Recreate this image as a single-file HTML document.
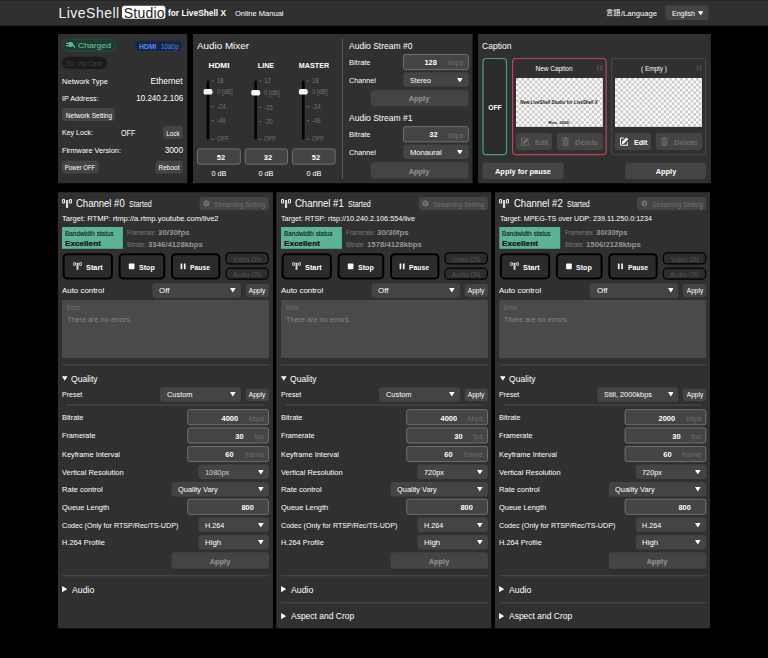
<!DOCTYPE html>
<html lang="en"><head><meta charset="utf-8"><title>LiveShell Studio for LiveShell X</title>
<style>
html,body{margin:0;padding:0;background:#000;}
body{width:768px;height:658px;position:relative;overflow:hidden;font-family:"Liberation Sans","Noto Sans CJK JP",sans-serif;color:#fff;}
body>div,body>svg{position:absolute;display:block;}
</style></head><body>
<svg style="left:0;top:0" width="768" height="658" viewBox="0 0 768 658"><rect x="0" y="0" width="768" height="25.7" fill="#303030"/><rect x="0" y="0" width="768" height="0.8" fill="#242424"/><rect x="122" y="5.8" width="43.4" height="12.9" fill="#fff" rx="2.5"/><rect x="665.4" y="5.3" width="42.9" height="14.7" fill="#444444" rx="3"/><rect x="58" y="34" width="129.2" height="149.3" fill="#303030"/><rect x="62.5" y="39.2" width="52.8" height="12" stroke="#28503f" stroke-width="1" fill="#1f3b30" rx="6"/><rect x="134.5" y="40.1" width="48" height="11.4" stroke="#243458" stroke-width="1" fill="#1b253c" rx="5.7"/><rect x="62" y="56.8" width="45" height="12.2" fill="#1b1b1b" rx="6.1"/><rect x="62" y="108" width="53" height="13" fill="#444444" rx="3"/><rect x="163" y="126" width="19.8" height="13" fill="#444444" rx="3"/><rect x="62" y="160.8" width="36.8" height="12.8" fill="#444444" rx="3"/><rect x="155.5" y="160.8" width="27.3" height="12.8" fill="#444444" rx="3"/><rect x="193" y="34" width="279.6" height="149.3" fill="#303030"/><rect x="197.45" y="148.95" width="42.9" height="15.2" stroke="#767676" stroke-width="0.9" fill="#444444" rx="2.05"/><rect x="245.25" y="148.95" width="42.3" height="15.2" stroke="#767676" stroke-width="0.9" fill="#444444" rx="2.05"/><rect x="292.45" y="148.95" width="42.7" height="15.2" stroke="#767676" stroke-width="0.9" fill="#444444" rx="2.05"/><rect x="403.45" y="54.45" width="64.9" height="15.2" stroke="#767676" stroke-width="0.9" fill="#444444" rx="2.05"/><rect x="403.4" y="72.3" width="65.2" height="14.5" fill="#444444" rx="3"/><rect x="370.8" y="89.9" width="97.8" height="16.4" fill="#444444" rx="3"/><rect x="403.45" y="126.65" width="64.9" height="15.2" stroke="#767676" stroke-width="0.9" fill="#444444" rx="2.05"/><rect x="403.4" y="144.5" width="65.2" height="14.5" fill="#444444" rx="3"/><rect x="370.8" y="162.1" width="97.8" height="16.4" fill="#444444" rx="3"/><rect x="478" y="34" width="232.9" height="149.3" fill="#303030"/><rect x="483" y="58.5" width="23.5" height="96.2" stroke="#4c9c84" stroke-width="1.2" fill="#2b2b2b" rx="3.4"/><rect x="512.6" y="58.5" width="93.5" height="96.2" stroke="#b14a58" stroke-width="1.2" fill="none" rx="3.4"/><rect x="597" y="65" width="1.9" height="5.7" fill="#484848"/><rect x="600.1" y="65" width="2.2" height="5.7" fill="#484848"/><rect x="515.9" y="133" width="36.1" height="17" fill="#444444" rx="3"/><rect x="556.7" y="133" width="46.1" height="17" fill="#444444" rx="3"/><rect x="611.6" y="58.5" width="93.9" height="96.2" stroke="#454545" stroke-width="1.2" fill="none" rx="3.4"/><rect x="696.4" y="65" width="1.9" height="5.7" fill="#484848"/><rect x="699.5" y="65" width="2.2" height="5.7" fill="#484848"/><rect x="614.9" y="133" width="36.1" height="17" fill="#444444" rx="3"/><rect x="655.7" y="133" width="46.5" height="17" fill="#444444" rx="3"/><rect x="482.4" y="162.4" width="81.4" height="16.6" fill="#444444" rx="3"/><rect x="625.3" y="162.4" width="80.7" height="16.6" fill="#444444" rx="3"/><rect x="57.9" y="192.2" width="215.1" height="436.2" fill="#303030"/><rect x="199.7" y="197" width="69.2" height="13.2" fill="#444444" rx="3"/><rect x="62" y="227" width="60.9" height="21.8" fill="#5fb395"/><rect x="63.6" y="254.3" width="48.3" height="24.1" stroke="#000" stroke-width="2" fill="#2b2b2b" rx="3.5"/><rect x="119.6" y="254.3" width="44.7" height="24.1" stroke="#000" stroke-width="2" fill="#2b2b2b" rx="3.5"/><rect x="172" y="254.3" width="47.4" height="24.1" stroke="#000" stroke-width="2" fill="#2b2b2b" rx="3.5"/><rect x="226" y="252.9" width="42.3" height="11" stroke="#000" stroke-width="1.2" fill="#2d2d2d" rx="3.9"/><rect x="226" y="268.2" width="42.3" height="11" stroke="#000" stroke-width="1.2" fill="#2d2d2d" rx="3.9"/><rect x="152.4" y="283.2" width="88.6" height="14.5" fill="#444444" rx="3"/><rect x="245.6" y="284" width="23.3" height="13" fill="#444444" rx="3"/><rect x="62" y="300" width="206.9" height="58" fill="#4a4a4a" rx="1"/><rect x="160" y="387.3" width="81" height="14.5" fill="#444444" rx="3"/><rect x="245.6" y="388.4" width="23.3" height="12.8" fill="#444444" rx="3"/><rect x="66.5" y="404.6" width="197.9" height="0.8" fill="#555"/><rect x="187.75" y="409.65" width="80.8" height="15.1" stroke="#767676" stroke-width="0.9" fill="#444444" rx="2.05"/><rect x="187.75" y="427.85" width="80.8" height="15.1" stroke="#767676" stroke-width="0.9" fill="#444444" rx="2.05"/><rect x="187.75" y="446.45" width="80.8" height="15.1" stroke="#767676" stroke-width="0.9" fill="#444444" rx="2.05"/><rect x="198.5" y="464.6" width="70.4" height="14.5" fill="#444444" rx="3"/><rect x="171.6" y="482" width="97.3" height="14.4" fill="#444444" rx="3"/><rect x="187.75" y="499.25" width="80.8" height="15.1" stroke="#767676" stroke-width="0.9" fill="#444444" rx="2.05"/><rect x="198.5" y="517.5" width="70.4" height="14.5" fill="#444444" rx="3"/><rect x="198.5" y="535" width="70.4" height="14.4" fill="#444444" rx="3"/><rect x="171.6" y="552.3" width="97.3" height="16.5" fill="#444444" rx="3"/><rect x="276.25" y="192.2" width="215.1" height="436.2" fill="#303030"/><rect x="418.7" y="197" width="69.2" height="13.2" fill="#444444" rx="3"/><rect x="281" y="227" width="60.9" height="21.8" fill="#5fb395"/><rect x="282.6" y="254.3" width="48.3" height="24.1" stroke="#000" stroke-width="2" fill="#2b2b2b" rx="3.5"/><rect x="338.6" y="254.3" width="44.7" height="24.1" stroke="#000" stroke-width="2" fill="#2b2b2b" rx="3.5"/><rect x="391" y="254.3" width="47.4" height="24.1" stroke="#000" stroke-width="2" fill="#2b2b2b" rx="3.5"/><rect x="445" y="252.9" width="42.3" height="11" stroke="#000" stroke-width="1.2" fill="#2d2d2d" rx="3.9"/><rect x="445" y="268.2" width="42.3" height="11" stroke="#000" stroke-width="1.2" fill="#2d2d2d" rx="3.9"/><rect x="371.4" y="283.2" width="88.6" height="14.5" fill="#444444" rx="3"/><rect x="464.6" y="284" width="23.3" height="13" fill="#444444" rx="3"/><rect x="281" y="300" width="206.9" height="58" fill="#4a4a4a" rx="1"/><rect x="379" y="387.3" width="81" height="14.5" fill="#444444" rx="3"/><rect x="464.6" y="388.4" width="23.3" height="12.8" fill="#444444" rx="3"/><rect x="285.5" y="404.6" width="197.9" height="0.8" fill="#555"/><rect x="406.75" y="409.65" width="80.8" height="15.1" stroke="#767676" stroke-width="0.9" fill="#444444" rx="2.05"/><rect x="406.75" y="427.85" width="80.8" height="15.1" stroke="#767676" stroke-width="0.9" fill="#444444" rx="2.05"/><rect x="406.75" y="446.45" width="80.8" height="15.1" stroke="#767676" stroke-width="0.9" fill="#444444" rx="2.05"/><rect x="417.5" y="464.6" width="70.4" height="14.5" fill="#444444" rx="3"/><rect x="390.6" y="482" width="97.3" height="14.4" fill="#444444" rx="3"/><rect x="406.75" y="499.25" width="80.8" height="15.1" stroke="#767676" stroke-width="0.9" fill="#444444" rx="2.05"/><rect x="417.5" y="517.5" width="70.4" height="14.5" fill="#444444" rx="3"/><rect x="417.5" y="535" width="70.4" height="14.4" fill="#444444" rx="3"/><rect x="390.6" y="552.3" width="97.3" height="16.5" fill="#444444" rx="3"/><rect x="494.9" y="192.2" width="215.1" height="436.2" fill="#303030"/><rect x="637" y="197" width="69.2" height="13.2" fill="#444444" rx="3"/><rect x="499.3" y="227" width="60.9" height="21.8" fill="#5fb395"/><rect x="500.9" y="254.3" width="48.3" height="24.1" stroke="#000" stroke-width="2" fill="#2b2b2b" rx="3.5"/><rect x="556.9" y="254.3" width="44.7" height="24.1" stroke="#000" stroke-width="2" fill="#2b2b2b" rx="3.5"/><rect x="609.3" y="254.3" width="47.4" height="24.1" stroke="#000" stroke-width="2" fill="#2b2b2b" rx="3.5"/><rect x="663.3" y="252.9" width="42.3" height="11" stroke="#000" stroke-width="1.2" fill="#2d2d2d" rx="3.9"/><rect x="663.3" y="268.2" width="42.3" height="11" stroke="#000" stroke-width="1.2" fill="#2d2d2d" rx="3.9"/><rect x="589.7" y="283.2" width="88.6" height="14.5" fill="#444444" rx="3"/><rect x="682.9" y="284" width="23.3" height="13" fill="#444444" rx="3"/><rect x="499.3" y="300" width="206.9" height="58" fill="#4a4a4a" rx="1"/><rect x="597.3" y="387.3" width="81" height="14.5" fill="#444444" rx="3"/><rect x="682.9" y="388.4" width="23.3" height="12.8" fill="#444444" rx="3"/><rect x="503.8" y="404.6" width="197.9" height="0.8" fill="#555"/><rect x="625.05" y="409.65" width="80.8" height="15.1" stroke="#767676" stroke-width="0.9" fill="#444444" rx="2.05"/><rect x="625.05" y="427.85" width="80.8" height="15.1" stroke="#767676" stroke-width="0.9" fill="#444444" rx="2.05"/><rect x="625.05" y="446.45" width="80.8" height="15.1" stroke="#767676" stroke-width="0.9" fill="#444444" rx="2.05"/><rect x="635.8" y="464.6" width="70.4" height="14.5" fill="#444444" rx="3"/><rect x="608.9" y="482" width="97.3" height="14.4" fill="#444444" rx="3"/><rect x="625.05" y="499.25" width="80.8" height="15.1" stroke="#767676" stroke-width="0.9" fill="#444444" rx="2.05"/><rect x="635.8" y="517.5" width="70.4" height="14.5" fill="#444444" rx="3"/><rect x="635.8" y="535" width="70.4" height="14.4" fill="#444444" rx="3"/><rect x="608.9" y="552.3" width="97.3" height="16.5" fill="#444444" rx="3"/></svg>
<div style="top:3px;height:20px;line-height:20px;font-size:14px;color:#f2f2f2;white-space:nowrap;left:58.5px;transform-origin:0 50%;transform:scaleX(1.000);letter-spacing:0.48px;">LiveShell</div>
<div style="top:3px;height:20px;line-height:20px;font-size:14px;color:#222;white-space:nowrap;left:123.7px;transform-origin:0 50%;transform:scaleX(1.000);letter-spacing:0.25px;">Studio</div>
<div style="top:3px;height:20px;line-height:20px;font-size:9.2px;color:#fff;white-space:nowrap;font-weight:700;left:167.8px;transform-origin:0 50%;transform:scaleX(0.908);">for LiveShell X</div>
<div style="top:4px;height:20px;line-height:20px;font-size:8px;color:#fff;white-space:nowrap;left:234.9px;transform-origin:0 50%;transform:scaleX(0.940);">Online Manual</div>
<div style="top:3px;height:20px;line-height:20px;font-size:7.3px;color:#fff;white-space:nowrap;left:606px;transform-origin:0 50%;transform:scaleX(1.000);">言語</div>
<div style="top:4px;height:20px;line-height:20px;font-size:8px;color:#fff;white-space:nowrap;left:620.6px;transform-origin:0 50%;transform:scaleX(0.952);">/Language</div>
<div style="top:4px;height:20px;line-height:20px;font-size:8px;color:#fff;white-space:nowrap;left:672.2px;transform-origin:0 50%;transform:scaleX(0.877);">English</div>
<svg style="left:697.6px;top:10.6px;" width="5.4" height="4.6" viewBox="0 0 10 8"><path d="M0 0H10L5 8Z" fill="#fff"/></svg>
<svg style="left:65.8px;top:41.6px;" width="9.6" height="6.6" viewBox="0 0 19 13"><rect x="0" y="1.4" width="7" height="2.3" rx="1" fill="#60b690"/><rect x="0" y="6" width="7" height="2.3" rx="1" fill="#60b690"/><path d="M5.5 0h4a4.9 4.9 0 0 1 0 9.8h-4z" fill="#60b690"/><path d="M13.2 6.6c3 0.300 4.200 2.600 4.800 5.800" stroke="#60b690" stroke-width="2.2" fill="none" stroke-linecap="round"/></svg>
<div style="top:36px;height:20px;line-height:20px;font-size:7.9px;color:#60b690;white-space:nowrap;left:78.3px;transform-origin:0 50%;transform:scaleX(1.092);-webkit-text-stroke:0.15px #60b690;">Charged</div>
<div style="top:37px;height:20px;line-height:20px;font-size:7px;color:#4d8df5;white-space:nowrap;font-weight:700;left:138.8px;transform-origin:0 50%;transform:scaleX(0.978);">HDMI</div>
<div style="top:37px;height:20px;line-height:20px;font-size:6.9px;color:#4785ee;white-space:nowrap;left:161.1px;transform-origin:0 50%;transform:scaleX(0.922);">1080p</div>
<div style="top:54px;height:20px;line-height:20px;font-size:7.2px;color:#424242;white-space:nowrap;left:66.3px;transform-origin:0 50%;transform:scaleX(0.800);">SD</div>
<div style="top:54px;height:20px;line-height:20px;font-size:7.2px;color:#424242;white-space:nowrap;left:79.3px;transform-origin:0 50%;transform:scaleX(0.847);">No Card</div>
<div style="top:72px;height:20px;line-height:20px;font-size:7.7px;color:#fff;white-space:nowrap;left:62px;transform-origin:0 50%;transform:scaleX(0.980);">Network Type</div>
<div style="top:71px;height:20px;line-height:20px;font-size:8.6px;color:#fff;white-space:nowrap;right:585.2px;text-align:right;transform-origin:100% 50%;transform:scaleX(0.984);">Ethernet</div>
<div style="top:89px;height:20px;line-height:20px;font-size:7.7px;color:#fff;white-space:nowrap;left:62px;transform-origin:0 50%;transform:scaleX(0.935);">IP Address:</div>
<div style="top:88px;height:20px;line-height:20px;font-size:8.6px;color:#fff;white-space:nowrap;right:585.2px;text-align:right;transform-origin:100% 50%;transform:scaleX(0.936);">10.240.2.106</div>
<div style="top:106px;height:20px;line-height:20px;font-size:6.7px;color:#fff;white-space:nowrap;left:-11.5px;width:200px;text-align:center;transform:scaleX(0.981);">Network Setting</div>
<div style="top:123px;height:20px;line-height:20px;font-size:7.7px;color:#fff;white-space:nowrap;left:62px;transform-origin:0 50%;transform:scaleX(0.917);">Key Lock:</div>
<div style="top:123px;height:20px;line-height:20px;font-size:8.6px;color:#fff;white-space:nowrap;left:120.8px;transform-origin:0 50%;transform:scaleX(0.832);">OFF</div>
<div style="top:124px;height:20px;line-height:20px;font-size:6.7px;color:#fff;white-space:nowrap;left:73.4px;width:200px;text-align:center;transform:scaleX(0.954);">Lock</div>
<div style="top:141px;height:20px;line-height:20px;font-size:7.7px;color:#fff;white-space:nowrap;left:62px;transform-origin:0 50%;transform:scaleX(0.951);">Firmware Version:</div>
<div style="top:140px;height:20px;line-height:20px;font-size:8.6px;color:#fff;white-space:nowrap;right:585.2px;text-align:right;transform-origin:100% 50%;transform:scaleX(0.967);">3000</div>
<div style="top:158px;height:20px;line-height:20px;font-size:6.7px;color:#fff;white-space:nowrap;left:-19.8px;width:200px;text-align:center;transform:scaleX(0.885);">Power OFF</div>
<div style="top:158px;height:20px;line-height:20px;font-size:6.7px;color:#fff;white-space:nowrap;left:68.9px;width:200px;text-align:center;transform:scaleX(0.972);">Reboot</div>
<div style="top:36px;height:20px;line-height:20px;font-size:9.6px;color:#fff;white-space:nowrap;left:197px;transform-origin:0 50%;transform:scaleX(1.026);">Audio Mixer</div>
<div style="top:56px;height:20px;line-height:20px;font-size:7.6px;color:#fff;white-space:nowrap;font-weight:700;left:118.75px;width:200px;text-align:center;transform:scaleX(1.081);">HDMI</div>
<div style="top:71px;height:20px;line-height:20px;font-size:6.4px;color:#727272;white-space:nowrap;left:217px;transform-origin:0 50%;transform:scaleX(0.940);">18</div>
<div style="top:82px;height:20px;line-height:20px;font-size:6.4px;color:#727272;white-space:nowrap;left:217px;transform-origin:0 50%;transform:scaleX(0.940);">0 [dB]</div>
<div style="top:97px;height:20px;line-height:20px;font-size:6.4px;color:#727272;white-space:nowrap;left:217px;transform-origin:0 50%;transform:scaleX(0.940);">-24</div>
<div style="top:111px;height:20px;line-height:20px;font-size:6.4px;color:#727272;white-space:nowrap;left:217px;transform-origin:0 50%;transform:scaleX(0.940);">-48</div>
<div style="top:129px;height:20px;line-height:20px;font-size:6.4px;color:#727272;white-space:nowrap;left:217px;transform-origin:0 50%;transform:scaleX(0.940);">OFF</div>
<div style="top:148px;height:20px;line-height:20px;font-size:7.8px;color:#fff;white-space:nowrap;font-weight:700;left:120.7px;width:200px;text-align:center;transform:scaleX(0.960);">52</div>
<div style="top:164px;height:20px;line-height:20px;font-size:7.4px;color:#fff;white-space:nowrap;left:118.5px;width:200px;text-align:center;transform:scaleX(0.985);">0 dB</div>
<div style="top:56px;height:20px;line-height:20px;font-size:7.6px;color:#fff;white-space:nowrap;font-weight:700;left:166px;width:200px;text-align:center;transform:scaleX(0.942);">LINE</div>
<div style="top:71px;height:20px;line-height:20px;font-size:6.4px;color:#727272;white-space:nowrap;left:264.15px;transform-origin:0 50%;transform:scaleX(0.940);">12</div>
<div style="top:83px;height:20px;line-height:20px;font-size:6.4px;color:#727272;white-space:nowrap;left:264.15px;transform-origin:0 50%;transform:scaleX(0.940);">0 [dB]</div>
<div style="top:98px;height:20px;line-height:20px;font-size:6.4px;color:#727272;white-space:nowrap;left:264.15px;transform-origin:0 50%;transform:scaleX(0.940);">-15</div>
<div style="top:112px;height:20px;line-height:20px;font-size:6.4px;color:#727272;white-space:nowrap;left:264.15px;transform-origin:0 50%;transform:scaleX(0.940);">-30</div>
<div style="top:129px;height:20px;line-height:20px;font-size:6.4px;color:#727272;white-space:nowrap;left:264.15px;transform-origin:0 50%;transform:scaleX(0.940);">OFF</div>
<div style="top:148px;height:20px;line-height:20px;font-size:7.8px;color:#fff;white-space:nowrap;font-weight:700;left:168.2px;width:200px;text-align:center;transform:scaleX(0.960);">32</div>
<div style="top:164px;height:20px;line-height:20px;font-size:7.4px;color:#fff;white-space:nowrap;left:166px;width:200px;text-align:center;transform:scaleX(0.985);">0 dB</div>
<div style="top:56px;height:20px;line-height:20px;font-size:7.6px;color:#fff;white-space:nowrap;font-weight:700;left:213.5px;width:200px;text-align:center;transform:scaleX(0.944);">MASTER</div>
<div style="top:71px;height:20px;line-height:20px;font-size:6.4px;color:#727272;white-space:nowrap;left:312.05px;transform-origin:0 50%;transform:scaleX(0.940);">18</div>
<div style="top:82px;height:20px;line-height:20px;font-size:6.4px;color:#727272;white-space:nowrap;left:312.05px;transform-origin:0 50%;transform:scaleX(0.940);">0 [dB]</div>
<div style="top:97px;height:20px;line-height:20px;font-size:6.4px;color:#727272;white-space:nowrap;left:312.05px;transform-origin:0 50%;transform:scaleX(0.940);">-24</div>
<div style="top:111px;height:20px;line-height:20px;font-size:6.4px;color:#727272;white-space:nowrap;left:312.05px;transform-origin:0 50%;transform:scaleX(0.940);">-48</div>
<div style="top:129px;height:20px;line-height:20px;font-size:6.4px;color:#727272;white-space:nowrap;left:312.05px;transform-origin:0 50%;transform:scaleX(0.940);">OFF</div>
<div style="top:148px;height:20px;line-height:20px;font-size:7.8px;color:#fff;white-space:nowrap;font-weight:700;left:215.7px;width:200px;text-align:center;transform:scaleX(0.960);">52</div>
<div style="top:164px;height:20px;line-height:20px;font-size:7.4px;color:#fff;white-space:nowrap;left:213.5px;width:200px;text-align:center;transform:scaleX(0.985);">0 dB</div>
<div style="top:36px;height:20px;line-height:20px;font-size:9.2px;color:#fff;white-space:nowrap;left:349px;transform-origin:0 50%;transform:scaleX(0.927);">Audio Stream #0</div>
<div style="top:53px;height:20px;line-height:20px;font-size:7.7px;color:#fff;white-space:nowrap;left:349px;transform-origin:0 50%;transform:scaleX(0.966);">Bitrate</div>
<div style="top:53px;height:20px;line-height:20px;font-size:7.7px;color:#fff;white-space:nowrap;font-weight:700;right:330.7px;text-align:right;transform-origin:100% 50%;transform:scaleX(0.970);">128</div>
<div style="top:53px;height:20px;line-height:20px;font-size:7.6px;color:#6c6c6c;white-space:nowrap;left:447.7px;transform-origin:0 50%;transform:scaleX(0.966);">kbps</div>
<div style="top:71px;height:20px;line-height:20px;font-size:7.7px;color:#fff;white-space:nowrap;left:349px;transform-origin:0 50%;transform:scaleX(0.941);">Channel</div>
<div style="top:71px;height:20px;line-height:20px;font-size:7.6px;color:#fff;white-space:nowrap;left:409.5px;transform-origin:0 50%;transform:scaleX(0.938);">Stereo</div>
<svg style="left:457.1px;top:77.6px;" width="5.6" height="4.6" viewBox="0 0 10 8"><path d="M0 0H10L5 8Z" fill="#fff"/></svg>
<div style="top:89px;height:20px;line-height:20px;font-size:7.6px;color:#8a8a8a;white-space:nowrap;font-weight:700;left:319.3px;width:200px;text-align:center;transform:scaleX(0.976);-webkit-text-stroke:0.25px #8a8a8a;">Apply</div>
<div style="top:108px;height:20px;line-height:20px;font-size:9.2px;color:#fff;white-space:nowrap;left:349px;transform-origin:0 50%;transform:scaleX(0.927);">Audio Stream #1</div>
<div style="top:125px;height:20px;line-height:20px;font-size:7.7px;color:#fff;white-space:nowrap;left:349px;transform-origin:0 50%;transform:scaleX(0.966);">Bitrate</div>
<div style="top:125px;height:20px;line-height:20px;font-size:7.7px;color:#fff;white-space:nowrap;font-weight:700;right:330.7px;text-align:right;transform-origin:100% 50%;transform:scaleX(0.970);">32</div>
<div style="top:126px;height:20px;line-height:20px;font-size:7.6px;color:#6c6c6c;white-space:nowrap;left:447.7px;transform-origin:0 50%;transform:scaleX(0.966);">kbps</div>
<div style="top:143px;height:20px;line-height:20px;font-size:7.7px;color:#fff;white-space:nowrap;left:349px;transform-origin:0 50%;transform:scaleX(0.941);">Channel</div>
<div style="top:143px;height:20px;line-height:20px;font-size:7.6px;color:#fff;white-space:nowrap;left:409.5px;transform-origin:0 50%;transform:scaleX(1.004);">Monaural</div>
<svg style="left:457.1px;top:149.8px;" width="5.6" height="4.6" viewBox="0 0 10 8"><path d="M0 0H10L5 8Z" fill="#fff"/></svg>
<div style="top:162px;height:20px;line-height:20px;font-size:7.6px;color:#8a8a8a;white-space:nowrap;font-weight:700;left:319.3px;width:200px;text-align:center;transform:scaleX(0.976);-webkit-text-stroke:0.25px #8a8a8a;">Apply</div>
<div style="top:36px;height:20px;line-height:20px;font-size:9.2px;color:#fff;white-space:nowrap;left:482px;transform-origin:0 50%;transform:scaleX(0.930);">Caption</div>
<div style="top:98px;height:20px;line-height:20px;font-size:7.4px;color:#fff;white-space:nowrap;font-weight:700;left:394.8px;width:200px;text-align:center;transform:scaleX(0.912);">OFF</div>
<div style="top:59px;height:20px;line-height:20px;font-size:7.4px;color:#fff;white-space:nowrap;left:453.75px;width:200px;text-align:center;transform:scaleX(0.876);">New Caption</div>
<svg style="left:515.9px;top:78px;" width="86.9" height="48.9" viewBox="0 0 86.9 48.9"><defs><pattern id="ck1" width="5.4" height="5.4" patternUnits="userSpaceOnUse"><rect width="5.4" height="5.4" fill="#fff"/><rect width="2.7" height="2.7" fill="#cbcbcb"/><rect x="2.7" y="2.7" width="2.7" height="2.7" fill="#cbcbcb"/></pattern></defs><rect width="86.9" height="48.9" fill="url(#ck1)"/></svg>
<div style="top:93px;height:20px;line-height:20px;font-size:4.9px;color:#1a1a1a;white-space:nowrap;font-weight:700;left:459.35px;width:200px;text-align:center;transform:scaleX(0.916);">New LiveShell Studio for LiveShell X</div>
<div style="top:113px;height:20px;line-height:20px;font-size:4.4px;color:#1a1a1a;white-space:nowrap;font-weight:700;left:459.35px;width:200px;text-align:center;transform:scaleX(1.046);">Rev. 3000</div>
<svg style="left:520.8px;top:137.2px;" width="8.7" height="8.7" viewBox="0.6 0.8 13.6 13.6"><path d="M10.5 1.5l3 3L7 11l-3.6 0.7L4 8z" fill="#6c6c6c"/><path d="M6 2.2H3.2C2 2.2 1.2 3 1.2 4.2v7.6c0 1.2 0.8 2 2 2h7.6c1.2 0 2-0.8 2-2V9" stroke="#6c6c6c" stroke-width="1.6" fill="none" stroke-linecap="round"/></svg>
<div style="top:133px;height:20px;line-height:20px;font-size:7.4px;color:#6c6c6c;white-space:nowrap;font-weight:700;left:534.8px;transform-origin:0 50%;transform:scaleX(0.966);">Edit</div>
<svg style="left:561.9px;top:136.9px;" width="7.3" height="9" viewBox="0 0 14 17"><path d="M4.500 0h5l0.700 1.600H14v2H0v-2h3.800z" fill="#666"/><path d="M1.200 4.800h11.600l-0.700 10.700a1.600 1.600 0 0 1-1.600 1.500H3.500a1.600 1.600 0 0 1-1.600-1.500z" fill="#666"/><path d="M4.600 6.800v8M7 6.800v8M9.400 6.800v8" stroke="#444" stroke-width="0.9"/></svg>
<div style="top:133px;height:20px;line-height:20px;font-size:7.4px;color:#6c6c6c;white-space:nowrap;font-weight:700;left:575.3px;transform-origin:0 50%;transform:scaleX(1.058);">Delete</div>
<div style="top:59px;height:20px;line-height:20px;font-size:7.4px;color:#fff;white-space:nowrap;left:553.85px;width:200px;text-align:center;transform:scaleX(0.866);">( Empty )</div>
<svg style="left:614.9px;top:78px;" width="87.3" height="48.9" viewBox="0 0 87.3 48.9"><defs><pattern id="ck2" width="5.4" height="5.4" patternUnits="userSpaceOnUse"><rect width="5.4" height="5.4" fill="#fff"/><rect width="2.7" height="2.7" fill="#cbcbcb"/><rect x="2.7" y="2.7" width="2.7" height="2.7" fill="#cbcbcb"/></pattern></defs><rect width="87.3" height="48.9" fill="url(#ck2)"/></svg>
<svg style="left:619.8px;top:137.2px;" width="8.7" height="8.7" viewBox="0.6 0.8 13.6 13.6"><path d="M10.5 1.5l3 3L7 11l-3.6 0.7L4 8z" fill="#fff"/><path d="M6 2.2H3.2C2 2.2 1.2 3 1.2 4.2v7.6c0 1.2 0.8 2 2 2h7.6c1.2 0 2-0.8 2-2V9" stroke="#fff" stroke-width="1.6" fill="none" stroke-linecap="round"/></svg>
<div style="top:133px;height:20px;line-height:20px;font-size:7.4px;color:#fff;white-space:nowrap;font-weight:700;left:633.8px;transform-origin:0 50%;transform:scaleX(0.966);">Edit</div>
<svg style="left:660.9px;top:136.9px;" width="7.3" height="9" viewBox="0 0 14 17"><path d="M4.500 0h5l0.700 1.600H14v2H0v-2h3.800z" fill="#666"/><path d="M1.200 4.800h11.600l-0.700 10.700a1.600 1.600 0 0 1-1.600 1.500H3.500a1.600 1.600 0 0 1-1.600-1.500z" fill="#666"/><path d="M4.600 6.800v8M7 6.800v8M9.400 6.800v8" stroke="#444" stroke-width="0.9"/></svg>
<div style="top:133px;height:20px;line-height:20px;font-size:7.4px;color:#6c6c6c;white-space:nowrap;font-weight:700;left:674.3px;transform-origin:0 50%;transform:scaleX(1.058);">Delete</div>
<div style="top:162px;height:20px;line-height:20px;font-size:7.6px;color:#fff;white-space:nowrap;font-weight:700;left:423.1px;width:200px;text-align:center;transform:scaleX(0.975);">Apply for pause</div>
<div style="top:162px;height:20px;line-height:20px;font-size:7.6px;color:#fff;white-space:nowrap;font-weight:700;left:565.7px;width:200px;text-align:center;transform:scaleX(0.971);">Apply</div>
<svg style="left:61.9px;top:199px;" width="10.1" height="9" viewBox="0 0 16.2 14.4"><rect x="6.300" y="1.500" width="3.600" height="12.900" rx="0.600" fill="#f0f0f0" opacity="0.88"/><rect x="0.900" y="0.900" width="3.300" height="5.600" rx="1.300" stroke="#f0f0f0" stroke-width="1.700" fill="none"/><rect x="12" y="0.900" width="3.300" height="5.600" rx="1.300" stroke="#f0f0f0" stroke-width="1.700" fill="none"/></svg>
<div style="top:194px;height:20px;line-height:20px;font-size:10.1px;color:#fff;white-space:nowrap;left:76.4px;transform-origin:0 50%;transform:scaleX(0.943);">Channel #0</div>
<div style="top:194px;height:20px;line-height:20px;font-size:8.3px;color:#fff;white-space:nowrap;left:129.2px;transform-origin:0 50%;transform:scaleX(0.852);">Started</div>
<svg style="left:203.2px;top:200.2px;" width="6.9" height="6.9" viewBox="-0.5 -0.5 17 17"><path d="M5.86 2.72L6.34 0.17L9.66 0.17L10.14 2.72L11.51 3.51L13.95 2.65L15.61 5.53L13.64 7.21L13.64 8.79L15.61 10.47L13.95 13.35L11.51 12.49L10.14 13.28L9.66 15.83L6.34 15.83L5.86 13.28L4.49 12.49L2.05 13.35L0.39 10.47L2.36 8.79L2.36 7.21L0.39 5.53L2.05 2.65L4.49 3.51Z" fill="#767676" stroke="#767676" stroke-width="0.8" stroke-linejoin="round"/><circle cx="8" cy="8" r="2.5" fill="#444"/></svg>
<div style="top:195px;height:20px;line-height:20px;font-size:7px;color:#727272;white-space:nowrap;left:214.4px;transform-origin:0 50%;transform:scaleX(0.917);">Streaming Setting</div>
<div style="top:209px;height:20px;line-height:20px;font-size:8px;color:#fff;white-space:nowrap;left:62.2px;transform-origin:0 50%;transform:scaleX(0.945);">Target: RTMP: rtmp://a.rtmp.youtube.com/live2</div>
<div style="top:224px;height:20px;line-height:20px;font-size:6.7px;color:#12291f;white-space:nowrap;left:64.7px;transform-origin:0 50%;transform:scaleX(0.956);-webkit-text-stroke:0.15px #12291f;">Bandwidth status</div>
<div style="top:234px;height:20px;line-height:20px;font-size:7.6px;color:#08120d;white-space:nowrap;font-weight:700;left:64.7px;transform-origin:0 50%;transform:scaleX(1.076);-webkit-text-stroke:0.2px #08120d;">Excellent</div>
<div style="top:223px;height:20px;line-height:20px;font-size:6.8px;color:#7a7a7a;white-space:nowrap;left:127.3px;transform-origin:0 50%;transform:scaleX(0.881);">Framerate:</div>
<div style="top:223px;height:20px;line-height:20px;font-size:7.7px;color:#959595;white-space:nowrap;font-weight:700;left:158.4px;transform-origin:0 50%;transform:scaleX(1.032);">30/30fps</div>
<div style="top:235px;height:20px;line-height:20px;font-size:6.8px;color:#7a7a7a;white-space:nowrap;left:127.3px;transform-origin:0 50%;transform:scaleX(0.882);">Bitrate:</div>
<div style="top:235px;height:20px;line-height:20px;font-size:7.7px;color:#959595;white-space:nowrap;font-weight:700;left:148.2px;transform-origin:0 50%;transform:scaleX(1.012);">3346/4128kbps</div>
<svg style="left:72.7px;top:262.2px;" width="9.1" height="7.8" viewBox="0 0 16.2 14.4"><rect x="6.300" y="1.500" width="3.600" height="12.900" rx="0.600" fill="#f0f0f0" opacity="0.88"/><rect x="0.900" y="0.900" width="3.300" height="5.600" rx="1.300" stroke="#f0f0f0" stroke-width="1.700" fill="none"/><rect x="12" y="0.900" width="3.300" height="5.600" rx="1.300" stroke="#f0f0f0" stroke-width="1.700" fill="none"/></svg>
<div style="top:258px;height:20px;line-height:20px;font-size:7.6px;color:#fff;white-space:nowrap;font-weight:700;left:86px;transform-origin:0 50%;transform:scaleX(0.964);">Start</div>
<div style="top:258px;height:20px;line-height:20px;font-size:7.6px;color:#fff;white-space:nowrap;font-weight:700;left:139px;transform-origin:0 50%;transform:scaleX(0.936);">Stop</div>
<div style="top:258px;height:20px;line-height:20px;font-size:7.6px;color:#fff;white-space:nowrap;font-weight:700;left:190.2px;transform-origin:0 50%;transform:scaleX(0.893);">Pause</div>
<div style="top:250px;height:20px;line-height:20px;font-size:6.8px;color:#555;white-space:nowrap;left:147.2px;width:200px;text-align:center;transform:scaleX(0.947);">Video ON</div>
<div style="top:265px;height:20px;line-height:20px;font-size:6.8px;color:#555;white-space:nowrap;left:147.1px;width:200px;text-align:center;transform:scaleX(0.973);">Audio ON</div>
<div style="top:281px;height:20px;line-height:20px;font-size:7.7px;color:#fff;white-space:nowrap;left:62px;transform-origin:0 50%;transform:scaleX(1.027);">Auto control</div>
<div style="top:281px;height:20px;line-height:20px;font-size:7.6px;color:#fff;white-space:nowrap;left:159.3px;transform-origin:0 50%;transform:scaleX(1.050);">Off</div>
<svg style="left:230.2px;top:288.2px;" width="5.6" height="4.6" viewBox="0 0 10 8"><path d="M0 0H10L5 8Z" fill="#fff"/></svg>
<div style="top:281px;height:20px;line-height:20px;font-size:6.8px;color:#fff;white-space:nowrap;left:157.2px;width:200px;text-align:center;transform:scaleX(0.964);">Apply</div>
<div style="top:298px;height:20px;line-height:20px;font-size:6.5px;color:#747474;white-space:nowrap;left:66.8px;transform-origin:0 50%;transform:scaleX(0.914);">Error</div>
<div style="top:310px;height:20px;line-height:20px;font-size:7.8px;color:#858585;white-space:nowrap;left:66.8px;transform-origin:0 50%;transform:scaleX(0.933);">There are no errors.</div>
<svg style="left:62.2px;top:375.9px;" width="5.6" height="5" viewBox="0 0 10 8"><path d="M0 0H10L5 8Z" fill="#fff"/></svg>
<div style="top:369px;height:20px;line-height:20px;font-size:9px;color:#fff;white-space:nowrap;left:71.3px;transform-origin:0 50%;transform:scaleX(0.950);">Quality</div>
<div style="top:385px;height:20px;line-height:20px;font-size:7.7px;color:#fff;white-space:nowrap;left:62px;transform-origin:0 50%;transform:scaleX(0.912);">Preset</div>
<div style="top:385px;height:20px;line-height:20px;font-size:7.6px;color:#fff;white-space:nowrap;left:166.8px;transform-origin:0 50%;transform:scaleX(0.974);">Custom</div>
<svg style="left:230.2px;top:392.4px;" width="5.6" height="4.6" viewBox="0 0 10 8"><path d="M0 0H10L5 8Z" fill="#fff"/></svg>
<div style="top:385px;height:20px;line-height:20px;font-size:6.8px;color:#fff;white-space:nowrap;left:157.2px;width:200px;text-align:center;transform:scaleX(0.964);">Apply</div>
<div style="top:408px;height:20px;line-height:20px;font-size:7.7px;color:#fff;white-space:nowrap;left:62px;transform-origin:0 50%;transform:scaleX(0.966);">Bitrate</div>
<div style="top:409px;height:20px;line-height:20px;font-size:7.7px;color:#fff;white-space:nowrap;font-weight:700;right:530.1px;text-align:right;transform-origin:100% 50%;transform:scaleX(0.970);">4000</div>
<div style="top:409px;height:20px;line-height:20px;font-size:7.6px;color:#6c6c6c;white-space:nowrap;left:248.6px;transform-origin:0 50%;transform:scaleX(0.966);">kbps</div>
<div style="top:426px;height:20px;line-height:20px;font-size:7.7px;color:#fff;white-space:nowrap;left:62px;transform-origin:0 50%;transform:scaleX(0.943);">Framerate</div>
<div style="top:427px;height:20px;line-height:20px;font-size:7.7px;color:#fff;white-space:nowrap;font-weight:700;right:524.4px;text-align:right;transform-origin:100% 50%;transform:scaleX(0.970);">30</div>
<div style="top:427px;height:20px;line-height:20px;font-size:7.6px;color:#6c6c6c;white-space:nowrap;left:254.1px;transform-origin:0 50%;transform:scaleX(0.976);">fps</div>
<div style="top:445px;height:20px;line-height:20px;font-size:7.7px;color:#fff;white-space:nowrap;left:62px;transform-origin:0 50%;transform:scaleX(0.961);">Keyframe Interval</div>
<div style="top:445px;height:20px;line-height:20px;font-size:7.7px;color:#fff;white-space:nowrap;font-weight:700;right:534px;text-align:right;transform-origin:100% 50%;transform:scaleX(0.970);">60</div>
<div style="top:445px;height:20px;line-height:20px;font-size:7.6px;color:#6c6c6c;white-space:nowrap;left:244.9px;transform-origin:0 50%;transform:scaleX(0.983);">frame</div>
<div style="top:463px;height:20px;line-height:20px;font-size:7.7px;color:#fff;white-space:nowrap;left:62px;transform-origin:0 50%;transform:scaleX(0.967);">Vertical Resolution</div>
<div style="top:463px;height:20px;line-height:20px;font-size:7.5px;color:#cfcfcf;white-space:nowrap;left:204.8px;transform-origin:0 50%;transform:scaleX(0.983);">1080px</div>
<svg style="left:258px;top:469.7px;" width="5.6" height="4.6" viewBox="0 0 10 8"><path d="M0 0H10L5 8Z" fill="#fff"/></svg>
<div style="top:480px;height:20px;line-height:20px;font-size:7.7px;color:#fff;white-space:nowrap;left:62px;transform-origin:0 50%;transform:scaleX(0.980);">Rate control</div>
<div style="top:480px;height:20px;line-height:20px;font-size:7.6px;color:#fff;white-space:nowrap;left:177.9px;transform-origin:0 50%;transform:scaleX(0.975);">Quality Vary</div>
<svg style="left:258px;top:487.1px;" width="5.6" height="4.6" viewBox="0 0 10 8"><path d="M0 0H10L5 8Z" fill="#fff"/></svg>
<div style="top:498px;height:20px;line-height:20px;font-size:7.7px;color:#fff;white-space:nowrap;left:62px;transform-origin:0 50%;transform:scaleX(0.969);">Queue Length</div>
<div style="top:498px;height:20px;line-height:20px;font-size:7.7px;color:#fff;white-space:nowrap;font-weight:700;right:514px;text-align:right;transform-origin:100% 50%;transform:scaleX(0.970);">800</div>
<div style="top:516px;height:20px;line-height:20px;font-size:7.7px;color:#fff;white-space:nowrap;left:62px;transform-origin:0 50%;transform:scaleX(0.927);">Codec (Only for RTSP/Rec/TS-UDP)</div>
<div style="top:516px;height:20px;line-height:20px;font-size:7.6px;color:#fff;white-space:nowrap;left:204.8px;transform-origin:0 50%;transform:scaleX(0.947);">H.264</div>
<svg style="left:258px;top:522.8px;" width="5.6" height="4.6" viewBox="0 0 10 8"><path d="M0 0H10L5 8Z" fill="#fff"/></svg>
<div style="top:533px;height:20px;line-height:20px;font-size:7.7px;color:#fff;white-space:nowrap;left:62px;transform-origin:0 50%;transform:scaleX(0.962);">H.264 Profile</div>
<div style="top:533px;height:20px;line-height:20px;font-size:7.6px;color:#fff;white-space:nowrap;left:204.8px;transform-origin:0 50%;transform:scaleX(1.036);">High</div>
<svg style="left:258px;top:540.1px;" width="5.6" height="4.6" viewBox="0 0 10 8"><path d="M0 0H10L5 8Z" fill="#fff"/></svg>
<div style="top:552px;height:20px;line-height:20px;font-size:7.6px;color:#8a8a8a;white-space:nowrap;font-weight:700;left:120.1px;width:200px;text-align:center;transform:scaleX(0.976);-webkit-text-stroke:0.25px #8a8a8a;">Apply</div>
<svg style="left:62px;top:586.4px;" width="5.2" height="6.2" viewBox="0 0 8 10"><path d="M0 0V10L8 5Z" fill="#fff"/></svg>
<div style="top:580px;height:20px;line-height:20px;font-size:9px;color:#fff;white-space:nowrap;left:71.6px;transform-origin:0 50%;transform:scaleX(0.973);">Audio</div>
<svg style="left:280.9px;top:199px;" width="10.1" height="9" viewBox="0 0 16.2 14.4"><rect x="6.300" y="1.500" width="3.600" height="12.900" rx="0.600" fill="#f0f0f0" opacity="0.88"/><rect x="0.900" y="0.900" width="3.300" height="5.600" rx="1.300" stroke="#f0f0f0" stroke-width="1.700" fill="none"/><rect x="12" y="0.900" width="3.300" height="5.600" rx="1.300" stroke="#f0f0f0" stroke-width="1.700" fill="none"/></svg>
<div style="top:194px;height:20px;line-height:20px;font-size:10.1px;color:#fff;white-space:nowrap;left:295.4px;transform-origin:0 50%;transform:scaleX(0.943);">Channel #1</div>
<div style="top:194px;height:20px;line-height:20px;font-size:8.3px;color:#fff;white-space:nowrap;left:348.2px;transform-origin:0 50%;transform:scaleX(0.852);">Started</div>
<svg style="left:422.2px;top:200.2px;" width="6.9" height="6.9" viewBox="-0.5 -0.5 17 17"><path d="M5.86 2.72L6.34 0.17L9.66 0.17L10.14 2.72L11.51 3.51L13.95 2.65L15.61 5.53L13.64 7.21L13.64 8.79L15.61 10.47L13.95 13.35L11.51 12.49L10.14 13.28L9.66 15.83L6.34 15.83L5.86 13.28L4.49 12.49L2.05 13.35L0.39 10.47L2.36 8.79L2.36 7.21L0.39 5.53L2.05 2.65L4.49 3.51Z" fill="#767676" stroke="#767676" stroke-width="0.8" stroke-linejoin="round"/><circle cx="8" cy="8" r="2.5" fill="#444"/></svg>
<div style="top:195px;height:20px;line-height:20px;font-size:7px;color:#727272;white-space:nowrap;left:433.4px;transform-origin:0 50%;transform:scaleX(0.917);">Streaming Setting</div>
<div style="top:209px;height:20px;line-height:20px;font-size:8px;color:#fff;white-space:nowrap;left:281.2px;transform-origin:0 50%;transform:scaleX(0.900);">Target: RTSP: rtsp://10.240.2.106:554/live</div>
<div style="top:224px;height:20px;line-height:20px;font-size:6.7px;color:#12291f;white-space:nowrap;left:283.7px;transform-origin:0 50%;transform:scaleX(0.956);-webkit-text-stroke:0.15px #12291f;">Bandwidth status</div>
<div style="top:234px;height:20px;line-height:20px;font-size:7.6px;color:#08120d;white-space:nowrap;font-weight:700;left:283.7px;transform-origin:0 50%;transform:scaleX(1.076);-webkit-text-stroke:0.2px #08120d;">Excellent</div>
<div style="top:223px;height:20px;line-height:20px;font-size:6.8px;color:#7a7a7a;white-space:nowrap;left:346.3px;transform-origin:0 50%;transform:scaleX(0.881);">Framerate:</div>
<div style="top:223px;height:20px;line-height:20px;font-size:7.7px;color:#959595;white-space:nowrap;font-weight:700;left:377.4px;transform-origin:0 50%;transform:scaleX(1.032);">30/30fps</div>
<div style="top:235px;height:20px;line-height:20px;font-size:6.8px;color:#7a7a7a;white-space:nowrap;left:346.3px;transform-origin:0 50%;transform:scaleX(0.882);">Bitrate:</div>
<div style="top:235px;height:20px;line-height:20px;font-size:7.7px;color:#959595;white-space:nowrap;font-weight:700;left:367.2px;transform-origin:0 50%;transform:scaleX(1.012);">1578/4128kbps</div>
<svg style="left:291.7px;top:262.2px;" width="9.1" height="7.8" viewBox="0 0 16.2 14.4"><rect x="6.300" y="1.500" width="3.600" height="12.900" rx="0.600" fill="#f0f0f0" opacity="0.88"/><rect x="0.900" y="0.900" width="3.300" height="5.600" rx="1.300" stroke="#f0f0f0" stroke-width="1.700" fill="none"/><rect x="12" y="0.900" width="3.300" height="5.600" rx="1.300" stroke="#f0f0f0" stroke-width="1.700" fill="none"/></svg>
<div style="top:258px;height:20px;line-height:20px;font-size:7.6px;color:#fff;white-space:nowrap;font-weight:700;left:305px;transform-origin:0 50%;transform:scaleX(0.964);">Start</div>
<div style="top:258px;height:20px;line-height:20px;font-size:7.6px;color:#fff;white-space:nowrap;font-weight:700;left:358px;transform-origin:0 50%;transform:scaleX(0.936);">Stop</div>
<div style="top:258px;height:20px;line-height:20px;font-size:7.6px;color:#fff;white-space:nowrap;font-weight:700;left:409.2px;transform-origin:0 50%;transform:scaleX(0.893);">Pause</div>
<div style="top:250px;height:20px;line-height:20px;font-size:6.8px;color:#555;white-space:nowrap;left:366.2px;width:200px;text-align:center;transform:scaleX(0.947);">Video ON</div>
<div style="top:265px;height:20px;line-height:20px;font-size:6.8px;color:#555;white-space:nowrap;left:366.1px;width:200px;text-align:center;transform:scaleX(0.973);">Audio ON</div>
<div style="top:281px;height:20px;line-height:20px;font-size:7.7px;color:#fff;white-space:nowrap;left:281px;transform-origin:0 50%;transform:scaleX(1.027);">Auto control</div>
<div style="top:281px;height:20px;line-height:20px;font-size:7.6px;color:#fff;white-space:nowrap;left:378.3px;transform-origin:0 50%;transform:scaleX(1.050);">Off</div>
<svg style="left:449.2px;top:288.2px;" width="5.6" height="4.6" viewBox="0 0 10 8"><path d="M0 0H10L5 8Z" fill="#fff"/></svg>
<div style="top:281px;height:20px;line-height:20px;font-size:6.8px;color:#fff;white-space:nowrap;left:376.2px;width:200px;text-align:center;transform:scaleX(0.964);">Apply</div>
<div style="top:298px;height:20px;line-height:20px;font-size:6.5px;color:#747474;white-space:nowrap;left:285.8px;transform-origin:0 50%;transform:scaleX(0.914);">Error</div>
<div style="top:310px;height:20px;line-height:20px;font-size:7.8px;color:#858585;white-space:nowrap;left:285.8px;transform-origin:0 50%;transform:scaleX(0.933);">There are no errors.</div>
<svg style="left:281.2px;top:375.9px;" width="5.6" height="5" viewBox="0 0 10 8"><path d="M0 0H10L5 8Z" fill="#fff"/></svg>
<div style="top:369px;height:20px;line-height:20px;font-size:9px;color:#fff;white-space:nowrap;left:290.3px;transform-origin:0 50%;transform:scaleX(0.950);">Quality</div>
<div style="top:385px;height:20px;line-height:20px;font-size:7.7px;color:#fff;white-space:nowrap;left:281px;transform-origin:0 50%;transform:scaleX(0.912);">Preset</div>
<div style="top:385px;height:20px;line-height:20px;font-size:7.6px;color:#fff;white-space:nowrap;left:385.8px;transform-origin:0 50%;transform:scaleX(0.974);">Custom</div>
<svg style="left:449.2px;top:392.4px;" width="5.6" height="4.6" viewBox="0 0 10 8"><path d="M0 0H10L5 8Z" fill="#fff"/></svg>
<div style="top:385px;height:20px;line-height:20px;font-size:6.8px;color:#fff;white-space:nowrap;left:376.2px;width:200px;text-align:center;transform:scaleX(0.964);">Apply</div>
<div style="top:408px;height:20px;line-height:20px;font-size:7.7px;color:#fff;white-space:nowrap;left:281px;transform-origin:0 50%;transform:scaleX(0.966);">Bitrate</div>
<div style="top:409px;height:20px;line-height:20px;font-size:7.7px;color:#fff;white-space:nowrap;font-weight:700;right:311.1px;text-align:right;transform-origin:100% 50%;transform:scaleX(0.970);">4000</div>
<div style="top:409px;height:20px;line-height:20px;font-size:7.6px;color:#6c6c6c;white-space:nowrap;left:467.6px;transform-origin:0 50%;transform:scaleX(0.966);">kbps</div>
<div style="top:426px;height:20px;line-height:20px;font-size:7.7px;color:#fff;white-space:nowrap;left:281px;transform-origin:0 50%;transform:scaleX(0.943);">Framerate</div>
<div style="top:427px;height:20px;line-height:20px;font-size:7.7px;color:#fff;white-space:nowrap;font-weight:700;right:305.4px;text-align:right;transform-origin:100% 50%;transform:scaleX(0.970);">30</div>
<div style="top:427px;height:20px;line-height:20px;font-size:7.6px;color:#6c6c6c;white-space:nowrap;left:473.1px;transform-origin:0 50%;transform:scaleX(0.976);">fps</div>
<div style="top:445px;height:20px;line-height:20px;font-size:7.7px;color:#fff;white-space:nowrap;left:281px;transform-origin:0 50%;transform:scaleX(0.961);">Keyframe Interval</div>
<div style="top:445px;height:20px;line-height:20px;font-size:7.7px;color:#fff;white-space:nowrap;font-weight:700;right:315px;text-align:right;transform-origin:100% 50%;transform:scaleX(0.970);">60</div>
<div style="top:445px;height:20px;line-height:20px;font-size:7.6px;color:#6c6c6c;white-space:nowrap;left:463.9px;transform-origin:0 50%;transform:scaleX(0.983);">frame</div>
<div style="top:463px;height:20px;line-height:20px;font-size:7.7px;color:#fff;white-space:nowrap;left:281px;transform-origin:0 50%;transform:scaleX(0.967);">Vertical Resolution</div>
<div style="top:463px;height:20px;line-height:20px;font-size:7.5px;color:#fff;white-space:nowrap;left:423.8px;transform-origin:0 50%;transform:scaleX(0.979);">720px</div>
<svg style="left:477px;top:469.7px;" width="5.6" height="4.6" viewBox="0 0 10 8"><path d="M0 0H10L5 8Z" fill="#fff"/></svg>
<div style="top:480px;height:20px;line-height:20px;font-size:7.7px;color:#fff;white-space:nowrap;left:281px;transform-origin:0 50%;transform:scaleX(0.980);">Rate control</div>
<div style="top:480px;height:20px;line-height:20px;font-size:7.6px;color:#fff;white-space:nowrap;left:396.9px;transform-origin:0 50%;transform:scaleX(0.975);">Quality Vary</div>
<svg style="left:477px;top:487.1px;" width="5.6" height="4.6" viewBox="0 0 10 8"><path d="M0 0H10L5 8Z" fill="#fff"/></svg>
<div style="top:498px;height:20px;line-height:20px;font-size:7.7px;color:#fff;white-space:nowrap;left:281px;transform-origin:0 50%;transform:scaleX(0.969);">Queue Length</div>
<div style="top:498px;height:20px;line-height:20px;font-size:7.7px;color:#fff;white-space:nowrap;font-weight:700;right:295px;text-align:right;transform-origin:100% 50%;transform:scaleX(0.970);">800</div>
<div style="top:516px;height:20px;line-height:20px;font-size:7.7px;color:#fff;white-space:nowrap;left:281px;transform-origin:0 50%;transform:scaleX(0.927);">Codec (Only for RTSP/Rec/TS-UDP)</div>
<div style="top:516px;height:20px;line-height:20px;font-size:7.6px;color:#fff;white-space:nowrap;left:423.8px;transform-origin:0 50%;transform:scaleX(0.947);">H.264</div>
<svg style="left:477px;top:522.8px;" width="5.6" height="4.6" viewBox="0 0 10 8"><path d="M0 0H10L5 8Z" fill="#fff"/></svg>
<div style="top:533px;height:20px;line-height:20px;font-size:7.7px;color:#fff;white-space:nowrap;left:281px;transform-origin:0 50%;transform:scaleX(0.962);">H.264 Profile</div>
<div style="top:533px;height:20px;line-height:20px;font-size:7.6px;color:#fff;white-space:nowrap;left:423.8px;transform-origin:0 50%;transform:scaleX(1.036);">High</div>
<svg style="left:477px;top:540.1px;" width="5.6" height="4.6" viewBox="0 0 10 8"><path d="M0 0H10L5 8Z" fill="#fff"/></svg>
<div style="top:552px;height:20px;line-height:20px;font-size:7.6px;color:#8a8a8a;white-space:nowrap;font-weight:700;left:339.1px;width:200px;text-align:center;transform:scaleX(0.976);-webkit-text-stroke:0.25px #8a8a8a;">Apply</div>
<svg style="left:281px;top:586.4px;" width="5.2" height="6.2" viewBox="0 0 8 10"><path d="M0 0V10L8 5Z" fill="#fff"/></svg>
<div style="top:580px;height:20px;line-height:20px;font-size:9px;color:#fff;white-space:nowrap;left:290.6px;transform-origin:0 50%;transform:scaleX(0.973);">Audio</div>
<svg style="left:281px;top:612.8px;" width="5.2" height="6.2" viewBox="0 0 8 10"><path d="M0 0V10L8 5Z" fill="#fff"/></svg>
<div style="top:606px;height:20px;line-height:20px;font-size:9px;color:#fff;white-space:nowrap;left:290.6px;transform-origin:0 50%;transform:scaleX(0.943);">Aspect and Crop</div>
<svg style="left:499.2px;top:199px;" width="10.1" height="9" viewBox="0 0 16.2 14.4"><rect x="6.300" y="1.500" width="3.600" height="12.900" rx="0.600" fill="#f0f0f0" opacity="0.88"/><rect x="0.900" y="0.900" width="3.300" height="5.600" rx="1.300" stroke="#f0f0f0" stroke-width="1.700" fill="none"/><rect x="12" y="0.900" width="3.300" height="5.600" rx="1.300" stroke="#f0f0f0" stroke-width="1.700" fill="none"/></svg>
<div style="top:194px;height:20px;line-height:20px;font-size:10.1px;color:#fff;white-space:nowrap;left:513.7px;transform-origin:0 50%;transform:scaleX(0.943);">Channel #2</div>
<div style="top:194px;height:20px;line-height:20px;font-size:8.3px;color:#fff;white-space:nowrap;left:566.5px;transform-origin:0 50%;transform:scaleX(0.852);">Started</div>
<svg style="left:640.5px;top:200.2px;" width="6.9" height="6.9" viewBox="-0.5 -0.5 17 17"><path d="M5.86 2.72L6.34 0.17L9.66 0.17L10.14 2.72L11.51 3.51L13.95 2.65L15.61 5.53L13.64 7.21L13.64 8.79L15.61 10.47L13.95 13.35L11.51 12.49L10.14 13.28L9.66 15.83L6.34 15.83L5.86 13.28L4.49 12.49L2.05 13.35L0.39 10.47L2.36 8.79L2.36 7.21L0.39 5.53L2.05 2.65L4.49 3.51Z" fill="#767676" stroke="#767676" stroke-width="0.8" stroke-linejoin="round"/><circle cx="8" cy="8" r="2.5" fill="#444"/></svg>
<div style="top:195px;height:20px;line-height:20px;font-size:7px;color:#727272;white-space:nowrap;left:651.7px;transform-origin:0 50%;transform:scaleX(0.917);">Streaming Setting</div>
<div style="top:209px;height:20px;line-height:20px;font-size:8px;color:#fff;white-space:nowrap;left:499.5px;transform-origin:0 50%;transform:scaleX(0.891);">Target: MPEG-TS over UDP: 239.11.250.0:1234</div>
<div style="top:224px;height:20px;line-height:20px;font-size:6.7px;color:#12291f;white-space:nowrap;left:502px;transform-origin:0 50%;transform:scaleX(0.956);-webkit-text-stroke:0.15px #12291f;">Bandwidth status</div>
<div style="top:234px;height:20px;line-height:20px;font-size:7.6px;color:#08120d;white-space:nowrap;font-weight:700;left:502px;transform-origin:0 50%;transform:scaleX(1.076);-webkit-text-stroke:0.2px #08120d;">Excellent</div>
<div style="top:223px;height:20px;line-height:20px;font-size:6.8px;color:#7a7a7a;white-space:nowrap;left:564.6px;transform-origin:0 50%;transform:scaleX(0.881);">Framerate:</div>
<div style="top:223px;height:20px;line-height:20px;font-size:7.7px;color:#959595;white-space:nowrap;font-weight:700;left:595.7px;transform-origin:0 50%;transform:scaleX(1.032);">30/30fps</div>
<div style="top:235px;height:20px;line-height:20px;font-size:6.8px;color:#7a7a7a;white-space:nowrap;left:564.6px;transform-origin:0 50%;transform:scaleX(0.882);">Bitrate:</div>
<div style="top:235px;height:20px;line-height:20px;font-size:7.7px;color:#959595;white-space:nowrap;font-weight:700;left:585.5px;transform-origin:0 50%;transform:scaleX(1.012);">1506/2128kbps</div>
<svg style="left:510px;top:262.2px;" width="9.1" height="7.8" viewBox="0 0 16.2 14.4"><rect x="6.300" y="1.500" width="3.600" height="12.900" rx="0.600" fill="#f0f0f0" opacity="0.88"/><rect x="0.900" y="0.900" width="3.300" height="5.600" rx="1.300" stroke="#f0f0f0" stroke-width="1.700" fill="none"/><rect x="12" y="0.900" width="3.300" height="5.600" rx="1.300" stroke="#f0f0f0" stroke-width="1.700" fill="none"/></svg>
<div style="top:258px;height:20px;line-height:20px;font-size:7.6px;color:#fff;white-space:nowrap;font-weight:700;left:523.3px;transform-origin:0 50%;transform:scaleX(0.964);">Start</div>
<div style="top:258px;height:20px;line-height:20px;font-size:7.6px;color:#fff;white-space:nowrap;font-weight:700;left:576.3px;transform-origin:0 50%;transform:scaleX(0.936);">Stop</div>
<div style="top:258px;height:20px;line-height:20px;font-size:7.6px;color:#fff;white-space:nowrap;font-weight:700;left:627.5px;transform-origin:0 50%;transform:scaleX(0.893);">Pause</div>
<div style="top:250px;height:20px;line-height:20px;font-size:6.8px;color:#555;white-space:nowrap;left:584.5px;width:200px;text-align:center;transform:scaleX(0.947);">Video ON</div>
<div style="top:265px;height:20px;line-height:20px;font-size:6.8px;color:#555;white-space:nowrap;left:584.4px;width:200px;text-align:center;transform:scaleX(0.973);">Audio ON</div>
<div style="top:281px;height:20px;line-height:20px;font-size:7.7px;color:#fff;white-space:nowrap;left:499.3px;transform-origin:0 50%;transform:scaleX(1.027);">Auto control</div>
<div style="top:281px;height:20px;line-height:20px;font-size:7.6px;color:#fff;white-space:nowrap;left:596.6px;transform-origin:0 50%;transform:scaleX(1.050);">Off</div>
<svg style="left:667.5px;top:288.2px;" width="5.6" height="4.6" viewBox="0 0 10 8"><path d="M0 0H10L5 8Z" fill="#fff"/></svg>
<div style="top:281px;height:20px;line-height:20px;font-size:6.8px;color:#fff;white-space:nowrap;left:594.5px;width:200px;text-align:center;transform:scaleX(0.964);">Apply</div>
<div style="top:298px;height:20px;line-height:20px;font-size:6.5px;color:#747474;white-space:nowrap;left:504.1px;transform-origin:0 50%;transform:scaleX(0.914);">Error</div>
<div style="top:310px;height:20px;line-height:20px;font-size:7.8px;color:#858585;white-space:nowrap;left:504.1px;transform-origin:0 50%;transform:scaleX(0.933);">There are no errors.</div>
<svg style="left:499.5px;top:375.9px;" width="5.6" height="5" viewBox="0 0 10 8"><path d="M0 0H10L5 8Z" fill="#fff"/></svg>
<div style="top:369px;height:20px;line-height:20px;font-size:9px;color:#fff;white-space:nowrap;left:508.6px;transform-origin:0 50%;transform:scaleX(0.950);">Quality</div>
<div style="top:385px;height:20px;line-height:20px;font-size:7.7px;color:#fff;white-space:nowrap;left:499.3px;transform-origin:0 50%;transform:scaleX(0.912);">Preset</div>
<div style="top:385px;height:20px;line-height:20px;font-size:7.6px;color:#fff;white-space:nowrap;left:604.1px;transform-origin:0 50%;transform:scaleX(0.971);">Still, 2000kbps</div>
<svg style="left:667.5px;top:392.4px;" width="5.6" height="4.6" viewBox="0 0 10 8"><path d="M0 0H10L5 8Z" fill="#fff"/></svg>
<div style="top:385px;height:20px;line-height:20px;font-size:6.8px;color:#fff;white-space:nowrap;left:594.5px;width:200px;text-align:center;transform:scaleX(0.964);">Apply</div>
<div style="top:408px;height:20px;line-height:20px;font-size:7.7px;color:#fff;white-space:nowrap;left:499.3px;transform-origin:0 50%;transform:scaleX(0.966);">Bitrate</div>
<div style="top:409px;height:20px;line-height:20px;font-size:7.7px;color:#fff;white-space:nowrap;font-weight:700;right:92.8px;text-align:right;transform-origin:100% 50%;transform:scaleX(0.970);">2000</div>
<div style="top:409px;height:20px;line-height:20px;font-size:7.6px;color:#6c6c6c;white-space:nowrap;left:685.9px;transform-origin:0 50%;transform:scaleX(0.966);">kbps</div>
<div style="top:426px;height:20px;line-height:20px;font-size:7.7px;color:#fff;white-space:nowrap;left:499.3px;transform-origin:0 50%;transform:scaleX(0.943);">Framerate</div>
<div style="top:427px;height:20px;line-height:20px;font-size:7.7px;color:#fff;white-space:nowrap;font-weight:700;right:87.1px;text-align:right;transform-origin:100% 50%;transform:scaleX(0.970);">30</div>
<div style="top:427px;height:20px;line-height:20px;font-size:7.6px;color:#6c6c6c;white-space:nowrap;left:691.4px;transform-origin:0 50%;transform:scaleX(0.976);">fps</div>
<div style="top:445px;height:20px;line-height:20px;font-size:7.7px;color:#fff;white-space:nowrap;left:499.3px;transform-origin:0 50%;transform:scaleX(0.961);">Keyframe Interval</div>
<div style="top:445px;height:20px;line-height:20px;font-size:7.7px;color:#fff;white-space:nowrap;font-weight:700;right:96.7px;text-align:right;transform-origin:100% 50%;transform:scaleX(0.970);">60</div>
<div style="top:445px;height:20px;line-height:20px;font-size:7.6px;color:#6c6c6c;white-space:nowrap;left:682.2px;transform-origin:0 50%;transform:scaleX(0.983);">frame</div>
<div style="top:463px;height:20px;line-height:20px;font-size:7.7px;color:#fff;white-space:nowrap;left:499.3px;transform-origin:0 50%;transform:scaleX(0.967);">Vertical Resolution</div>
<div style="top:463px;height:20px;line-height:20px;font-size:7.5px;color:#fff;white-space:nowrap;left:642.1px;transform-origin:0 50%;transform:scaleX(0.979);">720px</div>
<svg style="left:695.3px;top:469.7px;" width="5.6" height="4.6" viewBox="0 0 10 8"><path d="M0 0H10L5 8Z" fill="#fff"/></svg>
<div style="top:480px;height:20px;line-height:20px;font-size:7.7px;color:#fff;white-space:nowrap;left:499.3px;transform-origin:0 50%;transform:scaleX(0.980);">Rate control</div>
<div style="top:480px;height:20px;line-height:20px;font-size:7.6px;color:#fff;white-space:nowrap;left:615.2px;transform-origin:0 50%;transform:scaleX(0.975);">Quality Vary</div>
<svg style="left:695.3px;top:487.1px;" width="5.6" height="4.6" viewBox="0 0 10 8"><path d="M0 0H10L5 8Z" fill="#fff"/></svg>
<div style="top:498px;height:20px;line-height:20px;font-size:7.7px;color:#fff;white-space:nowrap;left:499.3px;transform-origin:0 50%;transform:scaleX(0.969);">Queue Length</div>
<div style="top:498px;height:20px;line-height:20px;font-size:7.7px;color:#fff;white-space:nowrap;font-weight:700;right:76.7px;text-align:right;transform-origin:100% 50%;transform:scaleX(0.970);">800</div>
<div style="top:516px;height:20px;line-height:20px;font-size:7.7px;color:#fff;white-space:nowrap;left:499.3px;transform-origin:0 50%;transform:scaleX(0.927);">Codec (Only for RTSP/Rec/TS-UDP)</div>
<div style="top:516px;height:20px;line-height:20px;font-size:7.6px;color:#fff;white-space:nowrap;left:642.1px;transform-origin:0 50%;transform:scaleX(0.947);">H.264</div>
<svg style="left:695.3px;top:522.8px;" width="5.6" height="4.6" viewBox="0 0 10 8"><path d="M0 0H10L5 8Z" fill="#fff"/></svg>
<div style="top:533px;height:20px;line-height:20px;font-size:7.7px;color:#fff;white-space:nowrap;left:499.3px;transform-origin:0 50%;transform:scaleX(0.962);">H.264 Profile</div>
<div style="top:533px;height:20px;line-height:20px;font-size:7.6px;color:#fff;white-space:nowrap;left:642.1px;transform-origin:0 50%;transform:scaleX(1.036);">High</div>
<svg style="left:695.3px;top:540.1px;" width="5.6" height="4.6" viewBox="0 0 10 8"><path d="M0 0H10L5 8Z" fill="#fff"/></svg>
<div style="top:552px;height:20px;line-height:20px;font-size:7.6px;color:#8a8a8a;white-space:nowrap;font-weight:700;left:557.4px;width:200px;text-align:center;transform:scaleX(0.976);-webkit-text-stroke:0.25px #8a8a8a;">Apply</div>
<svg style="left:499.3px;top:586.4px;" width="5.2" height="6.2" viewBox="0 0 8 10"><path d="M0 0V10L8 5Z" fill="#fff"/></svg>
<div style="top:580px;height:20px;line-height:20px;font-size:9px;color:#fff;white-space:nowrap;left:508.9px;transform-origin:0 50%;transform:scaleX(0.973);">Audio</div>
<svg style="left:499.3px;top:612.8px;" width="5.2" height="6.2" viewBox="0 0 8 10"><path d="M0 0V10L8 5Z" fill="#fff"/></svg>
<div style="top:606px;height:20px;line-height:20px;font-size:9px;color:#fff;white-space:nowrap;left:508.9px;transform-origin:0 50%;transform:scaleX(0.943);">Aspect and Crop</div>
<svg style="left:0;top:0;pointer-events:none" width="768" height="658" viewBox="0 0 768 658"><rect x="206.65" y="80.4" width="2.7" height="59.1" fill="#040404" rx="1.3"/><rect x="211.4" y="80.6" width="2.5" height="0.8" fill="#747474"/><rect x="211.4" y="91.6" width="2.5" height="0.8" fill="#747474"/><rect x="211.4" y="106.1" width="2.5" height="0.8" fill="#747474"/><rect x="211.4" y="120.3" width="2.5" height="0.8" fill="#747474"/><rect x="211.4" y="138.8" width="2.5" height="0.8" fill="#747474"/><rect x="203.6" y="89.1" width="8.8" height="5.4" fill="#f6f6f6" rx="1.6"/><rect x="254.3" y="80.4" width="2.7" height="59.1" fill="#040404" rx="1.3"/><rect x="259.05" y="80.6" width="2.5" height="0.8" fill="#747474"/><rect x="259.05" y="92.6" width="2.5" height="0.8" fill="#747474"/><rect x="259.05" y="107.1" width="2.5" height="0.8" fill="#747474"/><rect x="259.05" y="121.3" width="2.5" height="0.8" fill="#747474"/><rect x="259.05" y="138.8" width="2.5" height="0.8" fill="#747474"/><rect x="251.25" y="90" width="8.8" height="5.4" fill="#f6f6f6" rx="1.6"/><rect x="301.9" y="80.4" width="2.7" height="59.1" fill="#040404" rx="1.3"/><rect x="306.65" y="80.6" width="2.5" height="0.8" fill="#747474"/><rect x="306.65" y="91.6" width="2.5" height="0.8" fill="#747474"/><rect x="306.65" y="106.1" width="2.5" height="0.8" fill="#747474"/><rect x="306.65" y="120.3" width="2.5" height="0.8" fill="#747474"/><rect x="306.65" y="138.8" width="2.5" height="0.8" fill="#747474"/><rect x="298.85" y="89.1" width="8.8" height="5.4" fill="#f6f6f6" rx="1.6"/><rect x="342.1" y="38.8" width="0.8" height="140" fill="#666"/><rect x="128.8" y="263.5" width="5.7" height="5.7" fill="#f6f6f6" rx="0.8"/><rect x="180.6" y="263.4" width="1.7" height="5.8" fill="#f4f4f4" rx="0.4"/><rect x="183.9" y="263.4" width="1.7" height="5.8" fill="#f4f4f4" rx="0.4"/><rect x="62" y="364.3" width="206.9" height="1.2" fill="#474747"/><rect x="62" y="575.1" width="206.9" height="1.2" fill="#474747"/><rect x="347.8" y="263.5" width="5.7" height="5.7" fill="#f6f6f6" rx="0.8"/><rect x="399.6" y="263.4" width="1.7" height="5.8" fill="#f4f4f4" rx="0.4"/><rect x="402.9" y="263.4" width="1.7" height="5.8" fill="#f4f4f4" rx="0.4"/><rect x="281" y="364.3" width="206.9" height="1.2" fill="#474747"/><rect x="281" y="575.1" width="206.9" height="1.2" fill="#474747"/><rect x="281" y="602.1" width="206.9" height="1.2" fill="#474747"/><rect x="566.1" y="263.5" width="5.7" height="5.7" fill="#f6f6f6" rx="0.8"/><rect x="617.9" y="263.4" width="1.7" height="5.8" fill="#f4f4f4" rx="0.4"/><rect x="621.2" y="263.4" width="1.7" height="5.8" fill="#f4f4f4" rx="0.4"/><rect x="499.3" y="364.3" width="206.9" height="1.2" fill="#474747"/><rect x="499.3" y="575.1" width="206.9" height="1.2" fill="#474747"/><rect x="499.3" y="602.1" width="206.9" height="1.2" fill="#474747"/></svg>
</body></html>
